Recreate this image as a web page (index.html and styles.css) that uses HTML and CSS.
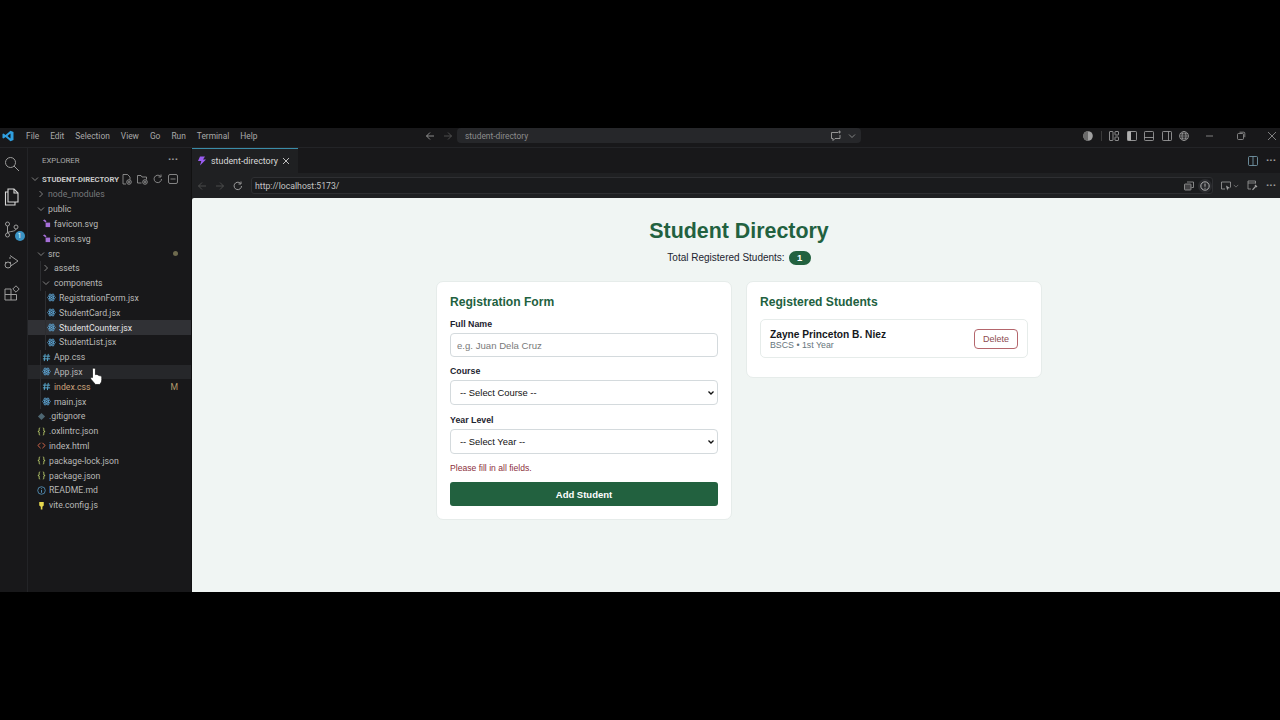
FILE: index.html
```html
<!DOCTYPE html>
<html lang="en">
<head>
    <meta charset="UTF-8">
    <title>student-directory</title>
    <link rel="stylesheet" href="styles.css">
</head>
<body>
    <svg class="defs" width="0" height="0">
        <symbol id="chev-r" viewBox="0 0 8 8"><path d="M2.500 1l3 3-3 3" fill="none" stroke="#9a9a9a" stroke-width=".8"/></symbol>
        <symbol id="chev-d" viewBox="0 0 8 8"><path d="M1 2.500l3 3 3-3" fill="none" stroke="#9a9a9a" stroke-width=".8"/></symbol>
        <symbol id="react" viewBox="0 0 10 10"><g fill="none" stroke="#5fa8d8" stroke-width=".8"><ellipse cx="5" cy="5" rx="4.400" ry="1.800"/><ellipse cx="5" cy="5" rx="4.400" ry="1.800" transform="rotate(60 5 5)"/><ellipse cx="5" cy="5" rx="4.400" ry="1.800" transform="rotate(120 5 5)"/></g><circle cx="5" cy="5" r=".9" fill="#5fa8d8"/></symbol>
        <symbol id="svgfile" viewBox="0 0 10 10"><path d="M1 1.500l2-1 2 2-1 1.500z" fill="#a66fd8"/><rect x="4" y="4" width="5" height="5" fill="#a66fd8"/></symbol>
        <symbol id="hash" viewBox="0 0 10 10"><path d="M3.500 1L2.500 9M7 1L6 9M1 3.500h8M1 6.500h8" stroke="#58a6c9" stroke-width="1.100" fill="none"/></symbol>
        <symbol id="braces" viewBox="0 0 10 10"><path d="M3.500 1C2 1 2.500 2.500 2.500 3.500S2 5 1 5c1 0 1.500 .5 1.500 1.500S2 9 3.500 9M6.500 1C8 1 7.500 2.500 7.500 3.500S8 5 9 5c-1 0-1.500 .5-1.500 1.500S8 9 6.500 9" fill="none" stroke="#b5c66a" stroke-width="1.100"/></symbol>
    </svg>

    <div class="bar-black"></div>

    <div class="window">
        <header class="titlebar">
            <svg class="logo" width="12" height="12" viewBox="0 0 12 12"><path d="M8.500.8L11.500 2v8l-3 1.200L3.500 7 1.500 8.500.5 8V4l1-.5 2 1.500z" fill="#2f9fe0"/><path d="M8.500 3.500L5.500 6l3 2.500z" fill="#131416"/></svg>
            <nav class="menu">
                <span>File</span><span>Edit</span><span>Selection</span><span>View</span><span>Go</span><span>Run</span><span>Terminal</span><span>Help</span>
            </nav>
            <div class="nav-arrows">
                <svg width="10" height="10" viewBox="0 0 10 10"><path d="M9 5H1.500M5 1.500L1.500 5 5 8.500" fill="none" stroke="#a8a8a8" stroke-width=".8"/></svg>
                <svg width="10" height="10" viewBox="0 0 10 10"><path d="M1 5h7.500M5 1.500L8.500 5 5 8.500" fill="none" stroke="#5c5c5c" stroke-width=".8"/></svg>
            </div>
            <div class="command">
                <span>student-directory</span>
                <svg class="chat" width="12" height="12" viewBox="0 0 12 12"><path d="M8 2.500H1.500v6H3v2l2-2h5V5" fill="none" stroke="#a0a0a0" stroke-width=".9"/><path d="M9.500 .5v3M8 2h3" stroke="#a0a0a0" stroke-width=".8"/></svg>
                <svg width="8" height="8"><use href="#chev-d"/></svg>
            </div>
            <div class="title-tools">
                <svg width="10" height="10" viewBox="0 0 10 10"><circle cx="5" cy="5" r="4.800" fill="#a0a0a0"/><path d="M5 .2V9.800A4.800 4.800 0 0 1 5 .2z" fill="#6a6a6a"/></svg>
                <i class="tool-sep"></i>
                <svg width="10" height="10" viewBox="0 0 10 10"><g fill="none" stroke="#a8a8a8" stroke-width=".8"><rect x=".5" y=".5" width="3.500" height="9" rx=".5"/><rect x="6" y=".5" width="3.500" height="3.500" rx=".5"/><rect x="6" y="6" width="3.500" height="3.500" rx=".5"/></g></svg>
                <svg width="10" height="10" viewBox="0 0 10 10"><rect x=".5" y=".5" width="9" height="9" rx=".8" fill="none" stroke="#b0b0b0" stroke-width=".8"/><rect x=".5" y=".5" width="3.500" height="9" fill="#b0b0b0"/></svg>
                <svg width="10" height="10" viewBox="0 0 10 10"><rect x=".5" y=".5" width="9" height="9" rx=".8" fill="none" stroke="#a8a8a8" stroke-width=".8"/><path d="M.5 6.500h9" stroke="#a8a8a8" stroke-width=".8"/></svg>
                <svg width="10" height="10" viewBox="0 0 10 10"><rect x=".5" y=".5" width="9" height="9" rx=".8" fill="none" stroke="#a8a8a8" stroke-width=".8"/><path d="M6.500 .5v9" stroke="#a8a8a8" stroke-width=".8"/></svg>
                <svg width="10" height="10" viewBox="0 0 10 10"><g fill="none" stroke="#a8a8a8" stroke-width=".7"><circle cx="5" cy="5" r="4.500"/><ellipse cx="5" cy="5" rx="2" ry="4.500"/><path d="M.5 5h9M1 2.800h8M1 7.200h8"/></g></svg>
            </div>
            <div class="win-btns">
                <svg width="10" height="10" viewBox="0 0 10 10"><path d="M1 5h7" stroke="#9a9a9a" stroke-width=".8"/></svg>
                <svg width="10" height="10" viewBox="0 0 10 10"><g fill="none" stroke="#9a9a9a" stroke-width=".8"><rect x="1.500" y="2.500" width="6" height="6" rx="1"/><path d="M3.500 1.200h4.300a1 1 0 0 1 1 1v4"/></g></svg>
                <svg width="10" height="10" viewBox="0 0 10 10"><path d="M1 1l8 8M9 1L1 9" stroke="#9a9a9a" stroke-width=".8"/></svg>
            </div>
        </header>

        <div class="workbench">
            <aside class="activity">
                <svg width="16" height="16" viewBox="0 0 16 16"><g fill="none" stroke="#9c9c9c" stroke-width="1"><circle cx="6.500" cy="6.500" r="5"/><path d="M10 10l5 5"/></g></svg>
                <svg width="16" height="18" viewBox="0 0 16 18"><g fill="none" stroke="#d8d8d8" stroke-width="1.100"><path d="M4 1h6l4 4v9H4z"/><path d="M10 1v4h4"/><path d="M4 4H1.500v13H11v-3"/></g></svg>
                <span class="act-git">
                    <svg width="16" height="17" viewBox="0 0 16 17"><g fill="none" stroke="#9c9c9c" stroke-width="1"><circle cx="3.500" cy="3" r="2"/><circle cx="3.500" cy="14" r="2"/><circle cx="12" cy="6" r="2"/><path d="M3.500 5v7M12 8c0 3-8 2-8.500 4"/></g></svg>
                    <b class="badge-git">1</b>
                </span>
                <svg width="16" height="16" viewBox="0 0 16 16"><g fill="none" stroke="#9c9c9c" stroke-width="1"><path d="M6 1.500l8 5.500-8 5.500"/><path d="M6 3v2"/><circle cx="4" cy="11" r="3"/><path d="M1 8l1.500 1M7 8L5.500 9"/></g></svg>
                <svg width="16" height="16" viewBox="0 0 16 16"><g fill="none" stroke="#9c9c9c" stroke-width="1"><path d="M1 4h6v11H1zM1 9.500h11.500V15H7"/><path d="M12 .8L15.200 4 12 7.200 8.800 4z"/></g></svg>
            </aside>

            <aside class="sidebar">
                <div class="side-head"><span>EXPLORER</span><span class="dots">···</span></div>
                <div class="project">
                    <svg width="8" height="8"><use href="#chev-d"/></svg>
                    <strong>STUDENT-DIRECTORY</strong>
                    <span class="project-tools">
                        <svg width="10" height="11" viewBox="0 0 10 11"><g fill="none" stroke="#a0a0a0" stroke-width=".8"><path d="M1 .5h4.500L8 3v2.500M4 10H1V.5"/><circle cx="7" cy="8" r="2.300"/><path d="M7 6.700v2.600M5.700 8h2.600"/></g></svg>
                        <svg width="11" height="11" viewBox="0 0 11 11"><g fill="none" stroke="#a0a0a0" stroke-width=".8"><path d="M4.500 9H.5V1.500h3.500l1 1.500h4.500v2.500"/><circle cx="8" cy="8" r="2.300"/><path d="M8 6.700v2.600M6.700 8h2.600"/></g></svg>
                        <svg width="10" height="10" viewBox="0 0 10 10"><path d="M8.500 5A3.700 3.700 0 1 1 7.300 2.200M8 .5v2.500H5.500" fill="none" stroke="#a0a0a0" stroke-width=".8"/></svg>
                        <svg width="10" height="10" viewBox="0 0 10 10"><g fill="none" stroke="#a0a0a0" stroke-width=".8"><rect x=".5" y=".5" width="9" height="9" rx="1.500"/><path d="M2.500 5h5"/></g></svg>
                    </span>
                </div>
                <ul class="tree">
                    <li class="row d1"><svg class="tw" width="8" height="8"><use href="#chev-r"/></svg><span class="dim">node_modules</span></li>
                    <li class="row d1"><svg class="tw" width="8" height="8"><use href="#chev-d"/></svg><span>public</span></li>
                    <li class="row d2"><svg class="ic" width="9" height="9"><use href="#svgfile"/></svg><span>favicon.svg</span></li>
                    <li class="row d2"><svg class="ic" width="9" height="9"><use href="#svgfile"/></svg><span>icons.svg</span></li>
                    <li class="row d1"><svg class="tw" width="8" height="8"><use href="#chev-d"/></svg><span>src</span><i class="git-dot"></i></li>
                    <li class="row d2 g1"><svg class="tw" width="8" height="8"><use href="#chev-r"/></svg><span>assets</span></li>
                    <li class="row d2 g1"><svg class="tw" width="8" height="8"><use href="#chev-d"/></svg><span>components</span></li>
                    <li class="row d3 g2"><svg class="ic" width="9" height="9"><use href="#react"/></svg><span>RegistrationForm.jsx</span></li>
                    <li class="row d3 g2"><svg class="ic" width="9" height="9"><use href="#react"/></svg><span>StudentCard.jsx</span></li>
                    <li class="row d3 g2 selected"><svg class="ic" width="9" height="9"><use href="#react"/></svg><span>StudentCounter.jsx</span></li>
                    <li class="row d3 g2"><svg class="ic" width="9" height="9"><use href="#react"/></svg><span>StudentList.jsx</span></li>
                    <li class="row d2 g1"><svg class="ic" width="9" height="9"><use href="#hash"/></svg><span>App.css</span></li>
                    <li class="row d2 g1 hover"><svg class="ic" width="9" height="9"><use href="#react"/></svg><span>App.jsx</span></li>
                    <li class="row d2 g1 changed"><svg class="ic" width="9" height="9"><use href="#hash"/></svg><span>index.css</span><em>M</em></li>
                    <li class="row d2 g1"><svg class="ic" width="9" height="9"><use href="#react"/></svg><span>main.jsx</span></li>
                    <li class="row d1"><svg class="ic" width="9" height="9" viewBox="0 0 10 10"><path d="M5 1l4 4-4 4-4-4z" fill="#4d6672"/></svg><span>.gitignore</span></li>
                    <li class="row d1"><svg class="ic" width="9" height="9"><use href="#braces"/></svg><span>.oxlintrc.json</span></li>
                    <li class="row d1"><svg class="ic" width="9" height="9" viewBox="0 0 10 10"><path d="M4 2L1 5l3 3M6 2l3 3-3 3" fill="none" stroke="#d0664a" stroke-width="1.100"/></svg><span>index.html</span></li>
                    <li class="row d1"><svg class="ic" width="9" height="9"><use href="#braces"/></svg><span>package-lock.json</span></li>
                    <li class="row d1"><svg class="ic" width="9" height="9"><use href="#braces"/></svg><span>package.json</span></li>
                    <li class="row d1"><svg class="ic" width="9" height="9" viewBox="0 0 10 10"><circle cx="5" cy="5" r="4.200" fill="none" stroke="#5fa8d8" stroke-width=".8"/><path d="M5 2.500v1M5 4.500v3" stroke="#5fa8d8" stroke-width=".9"/></svg><span>README.md</span></li>
                    <li class="row d1"><svg class="ic" width="9" height="9" viewBox="0 0 10 10"><path d="M2.500 1h5v4L6 6.500v3H4.200v-3L2.500 5z" fill="#e6d94f"/></svg><span>vite.config.js</span></li>
                </ul>
            </aside>

            <main class="editor">
                <div class="tabs">
                    <div class="tab">
                        <svg width="10" height="10" viewBox="0 0 10 10"><path d="M3 .5h5L6 3.500h3L3 9.500 4.300 5H1z" fill="#9a5cf0"/></svg>
                        <span>student-directory</span>
                        <svg class="tab-x" width="8" height="8" viewBox="0 0 8 8"><path d="M1 1l6 6M7 1L1 7" stroke="#d0d0d0" stroke-width=".9"/></svg>
                    </div>
                    <div class="tab-tools">
                        <svg width="10" height="10" viewBox="0 0 10 10"><rect x=".5" y=".5" width="9" height="9" rx="1" fill="none" stroke="#7fa6b8" stroke-width=".8"/><path d="M5 .5v9" stroke="#7fa6b8" stroke-width=".8"/></svg>
                        <span class="dots">···</span>
                    </div>
                </div>
                <div class="urlbar">
                    <svg width="10" height="10" viewBox="0 0 10 10"><path d="M9 5H1.500M5 1.500L1.500 5 5 8.500" fill="none" stroke="#555" stroke-width=".8"/></svg>
                    <svg width="10" height="10" viewBox="0 0 10 10"><path d="M1 5h7.500M5 1.500L8.500 5 5 8.500" fill="none" stroke="#555" stroke-width=".8"/></svg>
                    <svg width="10" height="10" viewBox="0 0 10 10"><path d="M8.500 5A3.700 3.700 0 1 1 7.300 2.200M8 .5v2.500H5.500" fill="none" stroke="#a8a8a8" stroke-width=".9"/></svg>
                    <div class="url">
                        <span>http://localhost:5173/</span>
                        <svg class="url-copy" width="10" height="10" viewBox="0 0 10 10"><g fill="none" stroke="#a0a0a0" stroke-width=".8"><rect x=".5" y="3" width="6.500" height="6" rx=".6" fill="#a0a0a0" fill-opacity=".3"/><path d="M3 1h6.500v5.500H7.500"/></g></svg>
                        <span class="url-info"><svg width="10" height="10" viewBox="0 0 10 10"><circle cx="5" cy="5" r="4.200" fill="none" stroke="#c0c0c0" stroke-width=".9"/><path d="M5 2.500v3.200M5 6.800v.9" stroke="#c0c0c0" stroke-width=".9"/></svg></span>
                    </div>
                    <svg width="10" height="10" viewBox="0 0 10 10"><path d="M9.500 6.500V1H.5v7H4" fill="none" stroke="#a0a0a0" stroke-width=".8"/><path d="M5 4.500l4 2.500-2 .5-.8 2z" fill="#a0a0a0"/></svg>
                    <svg class="url-chev" width="6" height="6"><use href="#chev-d"/></svg>
                    <svg width="11" height="11" viewBox="0 0 11 11"><g fill="none" stroke="#a0a0a0" stroke-width=".8"><path d="M8.500 3.500V1H1v8h3"/><path d="M1 3h7.500"/></g><path d="M5.500 9.800L9 6M8 5l2 2" stroke="#a0a0a0" stroke-width="1.200"/></svg>
                    <span class="dots">···</span>
                </div>

                <section class="app">
                    <h1>Student Directory</h1>
                    <p class="total">Total Registered Students: <span class="pill">1</span></p>
                    <div class="columns">
                        <form class="card form-card">
                            <h2>Registration Form</h2>
                            <label for="fullName">Full Name</label>
                            <input id="fullName" type="text" placeholder="e.g. Juan Dela Cruz">
                            <label for="course">Course</label>
                            <select id="course"><option>-- Select Course --</option></select>
                            <label class="year-label" for="year">Year Level</label>
                            <select id="year"><option>-- Select Year --</option></select>
                            <p class="error">Please fill in all fields.</p>
                            <button type="button" class="add-btn">Add Student</button>
                        </form>
                        <div class="card list-card">
                            <h2>Registered Students</h2>
                            <div class="student">
                                <div class="student-info">
                                    <div class="student-name">Zayne Princeton B. Niez</div>
                                    <div class="student-meta">BSCS • 1st Year</div>
                                </div>
                                <button type="button" class="del-btn">Delete</button>
                            </div>
                        </div>
                    </div>
                </section>
            </main>
        </div>

        <svg class="cursor" width="15" height="18" viewBox="0 0 14 17"><path d="M3.200 10V2.300a1.400 1.400 0 0 1 2.800 0V7.200l1-.2c.8-.1 1.200 .2 1.400 .7 .8-.2 1.400 .1 1.600 .7 .9-.2 2 .1 2 1.200V12c0 2-1 3.500-2.200 4.500H6L1.800 11.600c-.9-1.300 .5-2.500 1.400-1.600z" fill="#fff" stroke="#111" stroke-width=".7"/></svg>
    </div>

    <div class="bar-black"></div>
</body>
</html>
```

FILE: styles.css
```css
* {
    box-sizing: border-box;
}

body {
    margin: 0;
    background: #000;
    font-family: Roboto, "Noto Sans", sans-serif;
    overflow: hidden;
}

.defs {
    position: absolute;
}

.bar-black {
    height: 128px;
    background: #000;
}

.window {
    position: relative;
    height: 464px;
    display: flex;
    flex-direction: column;
    background: #18181a;
    color: #b4b4b4;
    font-size: 8.800px;
    white-space: nowrap;
}

svg {
    flex: none;
    display: block;
}

/* title bar */
.titlebar {
    height: 20px;
    display: flex;
    align-items: center;
    padding: 0 0 4px 2px;
    background: #18181a;
    border-bottom: 1px solid #232427;
}

.menu {
    display: flex;
    gap: 11px;
    margin-left: 12px;
    width: 399px;
    font-size: 8.400px;
    color: #a8a8a8;
}

.nav-arrows {
    display: flex;
    gap: 8px;
}

.command {
    width: 404px;
    height: 15px;
    margin-left: 4px;
    padding: 0 5px 0 8px;
    display: flex;
    align-items: center;
    background: #26272a;
    border-radius: 4px;
    font-size: 8.400px;
    color: #8c8c8c;
}

.chat {
    margin-left: auto;
    margin-right: 6px;
}

.title-tools {
    display: flex;
    align-items: center;
    gap: 7.500px;
    margin-left: 222px;
}

.tool-sep {
    width: 1px;
    height: 10px;
    background: #3a3a3a;
}

.win-btns {
    display: flex;
    gap: 21px;
    margin-left: 16px;
}

.workbench {
    flex: 1;
    display: flex;
    min-height: 0;
}

/* activity bar */
.activity {
    width: 28px;
    flex: none;
    padding: 8px 4px 0 0;
    display: flex;
    flex-direction: column;
    align-items: center;
    gap: 15.500px;
    border-right: 1px solid #232427;
}

.act-git {
    position: relative;
}

.badge-git {
    position: absolute;
    right: -5px;
    bottom: -3px;
    width: 10px;
    height: 10px;
    border-radius: 50%;
    background: #3a93c4;
    color: #fff;
    font-size: 7px;
    font-weight: 400;
    line-height: 10px;
    text-align: center;
}

/* explorer */
.sidebar {
    width: 164px;
    flex: none;
    border-right: 1px solid #111;
}

.side-head {
    height: 23px;
    padding: 1px 13px 0 14px;
    display: flex;
    align-items: center;
    justify-content: space-between;
    font-size: 7.800px;
    color: #a8a8a8;
}

.dots {
    font-size: 11px;
    font-weight: 700;
    line-height: 10px;
    color: #a0a0a0;
}

.project {
    height: 16px;
    display: flex;
    align-items: center;
    padding-left: 3px;
    gap: 3px;
    font-size: 7.700px;
    color: #c8c8c8;
}

.project strong {
    width: 76px;
    font-weight: 700;
}

.project-tools {
    display: flex;
    gap: 5px;
    margin-left: 1px;
    align-items: center;
}

.tree {
    list-style: none;
    margin: 0;
    padding: 0;
}

.row {
    position: relative;
    height: 14.800px;
    display: flex;
    align-items: center;
    font-size: 8.700px;
    color: #b8b8b8;
}

.row .dim {
    color: #77787a;
}

.row .tw,
.row .ic {
    margin-right: 3px;
}

.d1 { padding-left: 9px; }
.d2 { padding-left: 14px; }
.d3 { padding-left: 19px; }

.d2 .tw { margin-right: 4px; }

.g1::before,
.g2::before {
    content: "";
    position: absolute;
    left: 12px;
    top: 0;
    bottom: 0;
    width: 1px;
    background: #2c2d30;
}

.g2::before {
    left: 17px;
}

.selected {
    background: #303135;
    color: #e4e4e4;
}

.hover {
    background: #26272a;
}

.changed span {
    color: #c9a27a;
}

.changed em {
    margin-left: auto;
    margin-right: 13px;
    font-style: normal;
    color: #b09a6a;
}

.git-dot {
    margin-left: auto;
    margin-right: 13px;
    width: 5px;
    height: 5px;
    border-radius: 50%;
    background: #6e6a4e;
}

/* editor */
.editor {
    flex: 1;
    min-width: 0;
    display: flex;
    flex-direction: column;
}

.tabs {
    height: 25px;
    display: flex;
    background: #18181a;
}

.tab {
    width: 106px;
    display: flex;
    align-items: center;
    padding-left: 5px;
    gap: 4px;
    font-size: 8.900px;
    color: #d8d8d8;
    background: #1f2022;
    border-top: 1px solid #3a8ca8;
}

.tab-tools {
    margin-left: auto;
    padding-right: 4px;
    display: flex;
    align-items: center;
    gap: 8px;
}

.urlbar {
    height: 25px;
    display: flex;
    align-items: center;
    padding: 0 4px 0 5px;
    gap: 8px;
    background: #1f2022;
}

.url {
    width: 964px;
    height: 17px;
    padding: 0 0 0 3px;
    display: flex;
    align-items: center;
    gap: 4px;
    font-size: 8.700px;
    color: #c4c4c4;
    background: #1a1b1d;
    border: 1px solid #2e2f32;
    border-radius: 3px;
}

.url-copy {
    margin-left: auto;
}

.url-info {
    width: 14px;
    height: 14px;
    display: flex;
    align-items: center;
    justify-content: center;
    background: #2a2b2e;
    border-radius: 50%;
}

.url-chev {
    margin-left: -6px;
}

/* the page inside the simple browser */
.app {
    flex: 1;
    padding: 19px 0 0 6px;
    display: flex;
    flex-direction: column;
    align-items: center;
    background: #f0f5f3;
    font-family: "Liberation Sans", Arial, sans-serif;
    color: #1c2430;
    border-top-left-radius: 2px;
}

h1 {
    margin: 0;
    font-size: 21.400px;
    line-height: 28px;
    color: #22613f;
}

.total {
    margin: 5px 0 0;
    display: flex;
    align-items: center;
    gap: 4px;
    font-size: 10px;
    line-height: 15px;
}

.pill {
    width: 22px;
    height: 14px;
    border-radius: 7px;
    background: #22613f;
    color: #fff;
    font-size: 9.500px;
    font-weight: 700;
    line-height: 14px;
    text-align: center;
}

.columns {
    margin-top: 16px;
    display: flex;
    align-items: flex-start;
    gap: 14px;
}

.card {
    width: 296px;
    padding: 13px;
    background: #fff;
    border: 1px solid #e6ecea;
    border-radius: 7px;
}

h2 {
    margin: 0;
    font-size: 12.100px;
    line-height: 15px;
    color: #22613f;
}

label {
    display: block;
    margin: 9px 0 3px;
    font-size: 8.800px;
    font-weight: 700;
    line-height: 11px;
    color: #1c2430;
}

.year-label {
    margin-top: 10px;
}

input,
select {
    display: block;
    width: 268px;
    border: 1px solid #d4dadd;
    border-radius: 4px;
    background-color: #fff;
    font-family: inherit;
    color: #111;
}

input {
    height: 24px;
    padding: 0 6px;
    font-size: 9.600px;
}

input::placeholder {
    color: #7a7a7a;
}

select {
    height: 25px;
    padding: 0 9px;
    font-size: 9.400px;
    appearance: none;
    background-image: url("data:image/svg+xml,%3Csvg xmlns='http://www.w3.org/2000/svg' width='6' height='4'%3E%3Cpath d='M.5.5L3 3 5.500.5' fill='none' stroke='%23111' stroke-width='1.300'/%3E%3C/svg%3E");
    background-repeat: no-repeat;
    background-position: right 3px center;
}

.error {
    margin: 9px 0 0;
    font-size: 8.600px;
    line-height: 11px;
    color: #8c2f3c;
}

.add-btn {
    display: block;
    width: 268px;
    height: 24px;
    margin-top: 8px;
    border: 0;
    border-radius: 3px;
    background: #22613f;
    color: #fff;
    font-family: inherit;
    font-size: 9.500px;
    font-weight: 700;
}

.list-card {
    padding-bottom: 19px;
}

.student {
    margin-top: 9px;
    height: 39px;
    padding: 0 9px;
    display: flex;
    align-items: center;
    justify-content: space-between;
    border: 1px solid #e6ecea;
    border-radius: 5px;
}

.student-info {
    padding-top: 2px;
}

.student-name {
    font-size: 10.200px;
    font-weight: 700;
    line-height: 11px;
    color: #15181c;
}

.student-meta {
    font-size: 8.800px;
    line-height: 10px;
    color: #66757c;
}

.del-btn {
    width: 44px;
    height: 20px;
    padding: 0;
    background: #fff;
    border: 1px solid #b4666c;
    border-radius: 4px;
    font-family: inherit;
    font-size: 9px;
    color: #8c4a50;
}

.cursor {
    position: absolute;
    left: 89px;
    top: 239px;
}
```
